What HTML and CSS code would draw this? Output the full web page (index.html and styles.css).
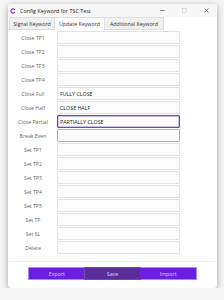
FILE: index.html
```html
<!DOCTYPE html>
<html>
<head>
    <title>Config Keyword for TSC Test</title>
    <link rel="stylesheet" href="styles.css">
</head>
<body>
    <div class="window">
        <div class="titlebar">
            <svg class="app-icon" viewBox="0 0 12 12">
                <path d="M9.2 3.2 A4.2 4.2 0 1 0 9.2 8.8" fill="none" stroke="#7a3ee6" stroke-width="2.4" stroke-linecap="round"/>
            </svg>
            <span class="title">Config Keyword for TSC Test</span>
            <div class="controls">
                <span class="ctl"><svg viewBox="0 0 10 10"><path d="M2.5 5h5" stroke="#444" stroke-width="0.7"/></svg></span>
                <span class="ctl"><svg viewBox="0 0 10 10"><rect x="2.8" y="2.8" width="4.4" height="4.4" fill="none" stroke="#c8c8c8" stroke-width="0.6"/></svg></span>
                <span class="ctl"><svg viewBox="0 0 10 10"><path d="M2.8 2.8l4.4 4.4M7.2 2.8l-4.4 4.4" stroke="#444" stroke-width="0.7"/></svg></span>
            </div>
        </div>

        <div class="tabs">
            <div class="tab tab-signal">Signal Keyword</div>
            <div class="tab tab-update active">Update Keyword</div>
            <div class="tab tab-additional">Additional Keyword</div>
        </div>

        <div class="form">
            <label>Close TP1</label><input type="text">
            <label>Close TP2</label><input type="text">
            <label>Close TP3</label><input type="text">
            <label>Close TP4</label><input type="text">
            <label>Close Full</label><input type="text" value="FULLY CLOSE">
            <label>Close Half</label><input type="text" value="CLOSE HALF">
            <label>Close Partial</label><input type="text" class="focused" value="PARTIALLY CLOSE">
            <label>Break Even</label><input type="text" class="hovered">
            <label>Set TP1</label><input type="text">
            <label>Set TP2</label><input type="text">
            <label>Set TP3</label><input type="text">
            <label>Set TP4</label><input type="text">
            <label>Set TP5</label><input type="text">
            <label>Set TP</label><input type="text">
            <label>Set SL</label><input type="text">
            <label>Delete</label><input type="text">
        </div>

        <div class="footer">
            <div class="btn-group">
                <button>Export</button>
                <button class="save">Save</button>
                <button>Import</button>
            </div>
        </div>
    </div>
</body>
</html>
```

FILE: styles.css
```css
body {
    margin: 0;
    background-color: #f6f6f6;
    font-family: "Open Sans", "Noto Sans", sans-serif;
}

.window {
    width: 209px;
    height: 284px;
    margin: 4px 0 0 8px;
    background-color: #ffffff;
    border-radius: 3px;
    box-shadow: 0 2px 7px rgba(0, 0, 0, 0.35);
    display: flex;
    flex-direction: column;
    overflow: hidden;
}

/* Title bar */
.titlebar {
    height: 13px;
    display: flex;
    align-items: center;
    padding-left: 2px;
    background-color: #f7f7f7;
}

.app-icon {
    width: 6px;
    height: 6px;
}

.title {
    margin-left: 4px;
    font-size: 5.4px;
    color: #222;
}

.controls {
    margin-left: auto;
    display: flex;
}

.ctl {
    width: 22px;
    height: 13px;
    display: flex;
    align-items: center;
    justify-content: center;
}

.ctl svg {
    width: 9px;
    height: 9px;
}

/* Tabs */
.tabs {
    height: 13px;
    display: flex;
    padding-left: 1px;
}

.tab {
    box-sizing: border-box;
    height: 13px;
    border: 1px solid #dedede;
    border-right: none;
    background-color: #f0f0f0;
    font-size: 5.3px;
    color: #333;
    display: flex;
    align-items: center;
    justify-content: center;
}

.tab:last-child {
    border-right: 1px solid #dedede;
}

.tab.active {
    background-color: #ffffff;
    border-bottom: none;
}

.tab-signal { width: 45px; }
.tab-update { width: 50px; }
.tab-additional { width: 60px; }

/* Form rows */
.form {
    display: grid;
    grid-template-columns: 48px 123px;
    grid-auto-rows: 13px;
    row-gap: 1px;
    padding: 1px 0 0 1px;
    align-items: center;
}

.form label {
    text-align: center;
    font-size: 5.2px;
    color: #666;
}

.form input {
    box-sizing: border-box;
    width: 123px;
    height: 13px;
    margin: 0;
    padding: 0 2px;
    border: 1px solid #e2e2e2;
    border-radius: 1px;
    background-color: #fcfcfc;
    font-family: "Open Sans", "Noto Sans", sans-serif;
    font-size: 5.3px;
    color: #222;
    outline: none;
}

.form input.focused {
    border: 1px solid #6a4bb0;
    box-shadow: inset 0 0 0 0.5px #9a82d0;
}

.form input.hovered {
    border-color: #b8a6dc;
}

/* Footer */
.footer {
    margin-top: 7px;
    border-top: 1px solid #ececec;
    padding: 5px 20px 0;
}

.btn-group {
    display: flex;
    height: 13px;
    border: 1px solid #a98ae6;
    box-sizing: border-box;
}

.btn-group button {
    flex: 1;
    margin: 0;
    padding: 0;
    border: none;
    background-color: #6b1fe3;
    color: #dccfff;
    font-family: "Open Sans", "Noto Sans", sans-serif;
    font-size: 5.3px;
    cursor: pointer;
}

.btn-group button.save {
    background-color: #5a2e98;
    box-shadow: 0 0 0 1px #6e4bb4;
}
```
